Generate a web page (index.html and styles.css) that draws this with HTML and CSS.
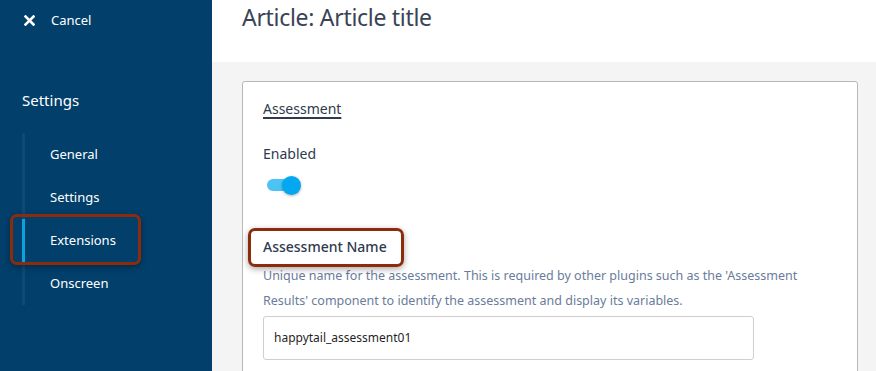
FILE: index.html
```html
<!DOCTYPE html>
<html>
<head>
<meta charset="utf-8">
<link rel="stylesheet" href="styles.css">
</head>
<body>
<div class="app">
  <aside class="sidebar">
    <div class="cancel">
      <svg class="x-icon" width="11" height="11" viewBox="0 0 11 11"><path d="M1.5 1.5 L9.5 9.5 M9.5 1.5 L1.5 9.5" stroke="#fff" stroke-width="2.6" stroke-linecap="square"/></svg>
      <span>Cancel</span>
    </div>
    <div class="side-title">Settings</div>
    <nav class="nav">
      <div class="nav-item">General</div>
      <div class="nav-item">Settings</div>
      <div class="nav-item active">Extensions<span class="hl hl-side"></span></div>
      <div class="nav-item">Onscreen</div>
    </nav>
  </aside>
  <main class="main">
    <header class="header"><h1>Article: Article title</h1></header>
    <section class="content">
      <div class="card">
        <div class="section-title">Assessment</div>
        <div class="label">Enabled</div>
        <div class="toggle"><span class="track"></span><span class="knob"></span></div>
        <div class="label name-label">Assessment Name<span class="hl hl-name"></span></div>
        <p class="desc">Unique name for the assessment. This is required by other plugins such as the 'Assessment Results' component to identify the assessment and display its variables.</p>
        <div class="input">happytail_assessment01</div>
      </div>
    </section>
  </main>
</div>
</body>
</html>
```
FILE: styles.css
```css
* { box-sizing: border-box; }
html, body { margin: 0; padding: 0; }
body {
  font-family: "Noto Sans", "Open Sans", sans-serif;
  width: 876px;
  height: 371px;
  overflow: hidden;
  background: #f4f4f4;
}
.app { display: flex; height: 371px; }
.sidebar {
  width: 212px;
  flex: none;
  background: #023f6b;
  color: #fff;
  padding-top: 10px;
}
.cancel {
  display: flex;
  align-items: center;
  height: 20px;
  padding-left: 24px;
  font-size: 13px;
}
.x-icon { margin-right: 16px; }
.side-title {
  margin-top: 59px;
  padding-left: 22px;
  font-size: 15px;
  line-height: 22px;
}
.nav {
  margin: 22px 0 0 22px;
  border-left: 3px solid #0f4a77;
  padding: 0;
  width: 130px;
}
.nav-item {
  position: relative;
  height: 43px;
  line-height: 43px;
  padding-left: 25px;
  font-size: 13px;
}
.nav-item.active { border-left: 3px solid #0aa2e0; margin-left: -3px; padding-left: 25px; }
.hl {
  position: absolute;
  border: 3px solid #8d2c0c;
  border-radius: 7px;
  box-shadow: 0 2px 6px rgba(0,0,0,0.35);
  pointer-events: none;
}
.hl-side { left: -15px; top: -5px; width: 131px; height: 51px; }
.main { flex: 1; display: flex; flex-direction: column; min-width: 0; }
.header {
  flex: none;
  background: #fff;
  height: 62px;
  padding: 4px 0 0 30px;
}
.header h1 {
  margin: 0;
  font-weight: 400;
  font-size: 23px;
  line-height: 26px;
  color: #3a4356;
  letter-spacing: -0.3px;
}
.content { padding: 19px 18px 0 30px; flex: 1; }
.card {
  background: #fff;
  border: 1px solid #b8b8b8;
  border-radius: 3px;
  height: 300px;
  padding: 17px 20px 0 20px;
  color: #2f3a4f;
}
.section-title {
  font-size: 14px;
  line-height: 20px;
  text-decoration: underline;
  text-decoration-thickness: 1.5px;
  text-underline-offset: 3px;
}
.label {
  position: relative;
  font-size: 14px;
  line-height: 20px;
  margin-top: 25px;
  display: inline-block;
}
.toggle {
  position: relative;
  width: 40px;
  height: 20px;
  margin: 11px 0 0 4px;
}
.track {
  position: absolute;
  left: 0; top: 4px;
  width: 26px; height: 12px;
  border-radius: 6px;
  background: #4cc3f5;
}
.knob {
  position: absolute;
  left: 15px; top: 1px;
  width: 19px; height: 19px;
  border-radius: 50%;
  background: #04a8f0;
  box-shadow: 0 1px 3px rgba(0,0,0,0.3);
}
.name-label { margin-top: 42px; font-weight: 500; }
.hl-name { left: -15px; top: -9px; width: 156px; height: 39px; }
.desc {
  margin: 6px 0 0;
  font-size: 12.5px;
  line-height: 25px;
  color: #6a7c9b;
  max-width: 548px;
}
.input {
  margin-top: 3px;
  width: 491px;
  height: 44px;
  border: 1px solid #cfcfcf;
  border-radius: 3px;
  padding-left: 10px;
  line-height: 42px;
  font-size: 12px;
  color: #1f1f1f;
}
```
